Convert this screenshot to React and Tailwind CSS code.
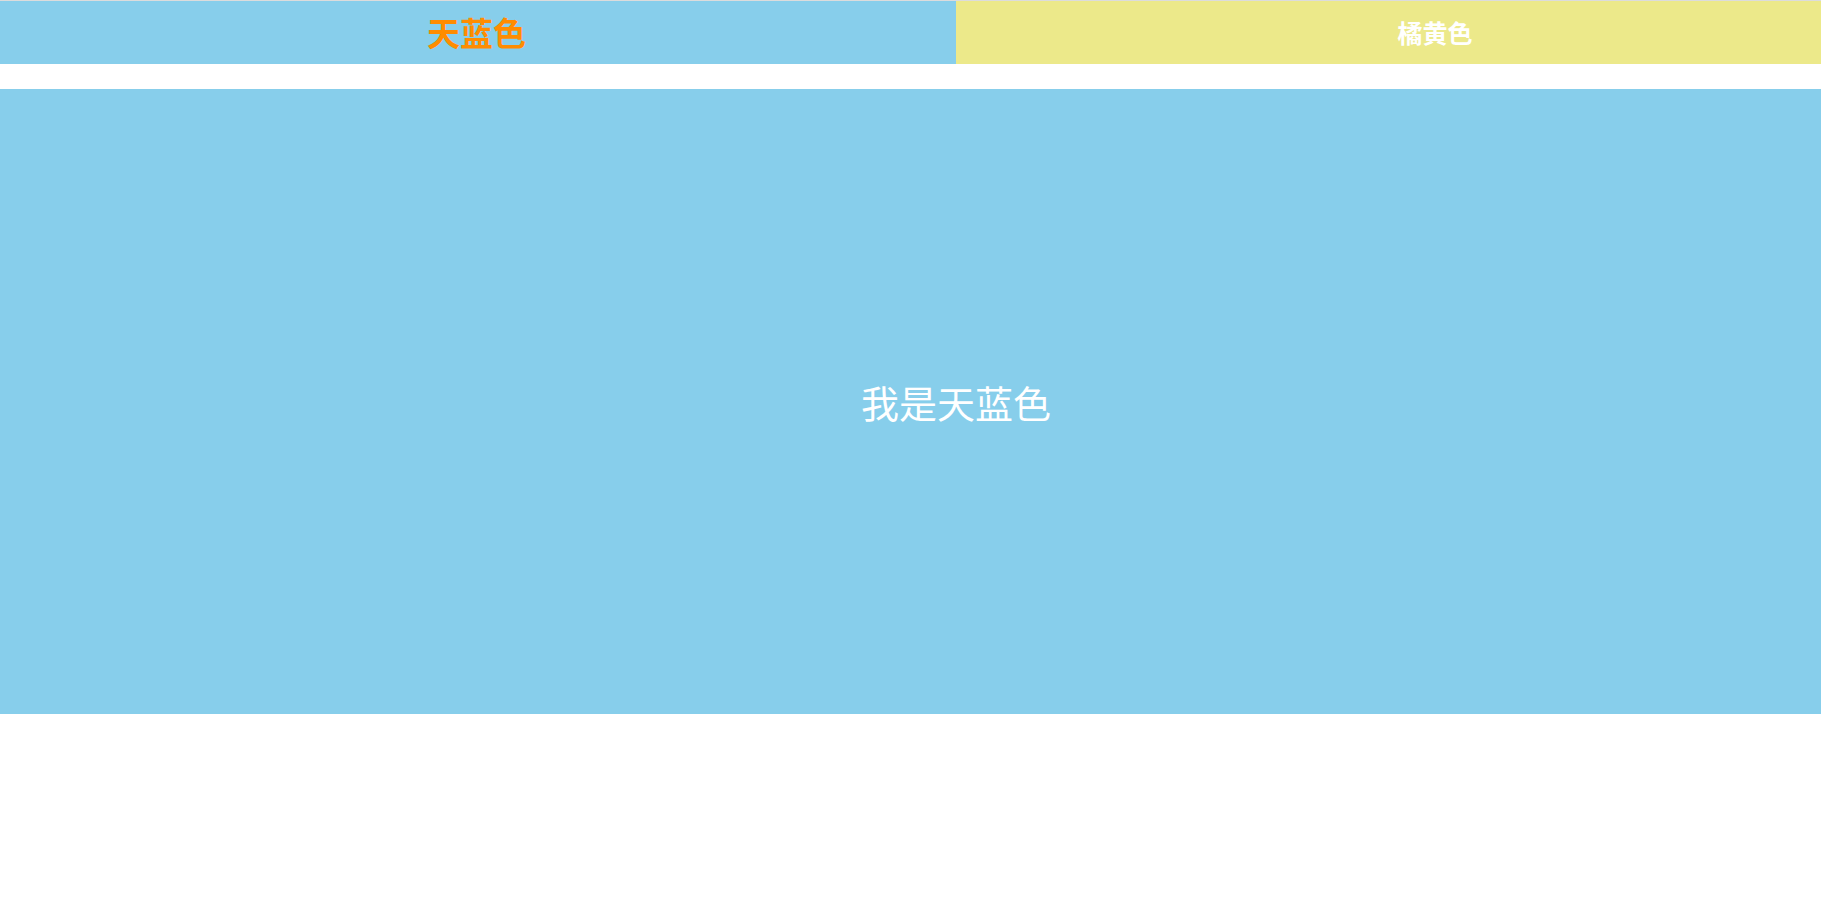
export default function App() {
  return (
    <div className="w-full overflow-hidden bg-white h-[902px]" style={{ fontFamily: '"Noto Sans CJK SC", "Noto Sans", sans-serif' }}>
      <div className="h-px bg-[#dcdcdc]" />
      <div className="w-[1912px]">
        <div className="grid grid-cols-2 h-[63px]">
          <div className="bg-[#87ceeb] flex items-center justify-center text-[33px] font-bold text-[#ff8c00] leading-none pr-[3px]">
            天蓝色
          </div>
          <div className="bg-[#ece98a] flex items-center justify-center text-[25px] font-bold text-white leading-none pl-[2px]">
            橘黄色
          </div>
        </div>
        <div className="mt-[25px] h-[625px] bg-[#87ceeb] flex items-center justify-center text-[38px] text-white leading-none">
          我是天蓝色
        </div>
      </div>
    </div>
  );
}
